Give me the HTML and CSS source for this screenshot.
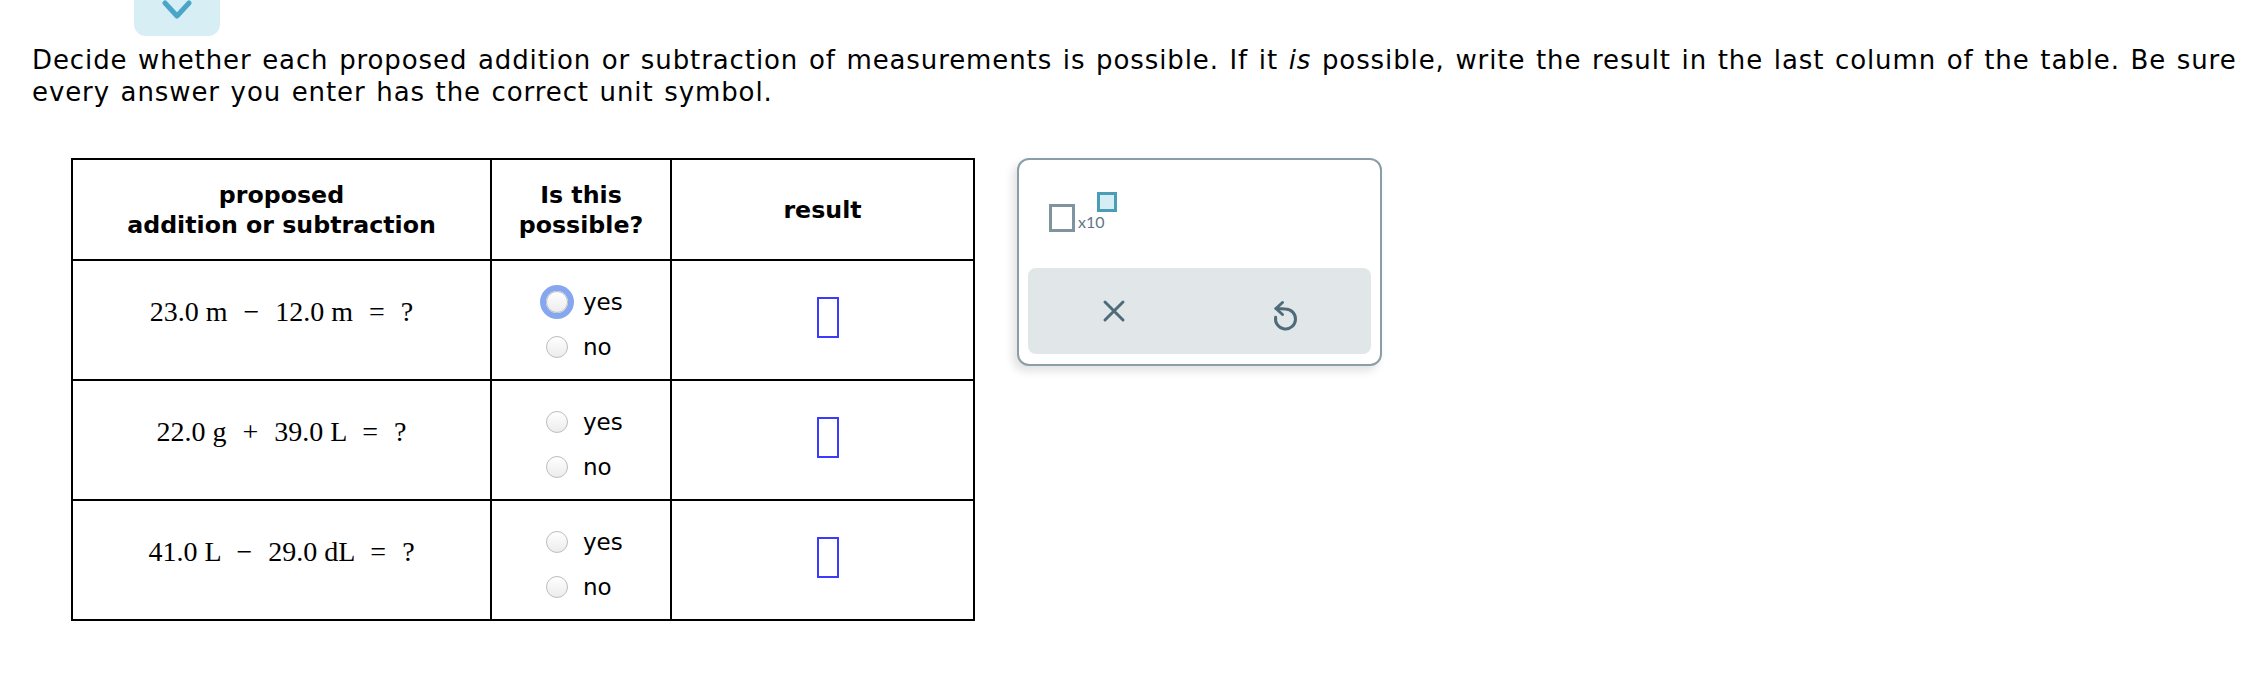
FILE: index.html
```html
<!DOCTYPE html>
<html lang="en">

<head>
    <meta charset="UTF-8">
    <title>Measurements</title>
    <link rel="stylesheet" href="styles.css">
</head>

<body>
    <div class="tab">
        <svg width="34" height="22" viewBox="0 0 34 22">
            <path d="M5 3 L17 16 L29 3" fill="none" stroke="#4aa6c8" stroke-width="5" stroke-linecap="round" stroke-linejoin="round" />
        </svg>
    </div>

    <p class="prompt">Decide whether each proposed addition or subtraction of measurements is possible. If it <i>is</i> possible, write the result in the last column of the table. Be sure every answer you enter has the correct unit symbol.</p>

    <div class="work">
        <table class="grid">
            <tr class="head">
                <th class="c1">proposed<br>addition or subtraction</th>
                <th class="c2">Is this<br>possible?</th>
                <th class="c3">result</th>
            </tr>
            <tr>
                <td class="math">23.0 m <span class="op">−</span> 12.0 m <span class="op">=</span> ?</td>
                <td>
                    <div class="choices">
                        <label class="opt"><span class="radio focus"></span>yes</label>
                        <label class="opt"><span class="radio"></span>no</label>
                    </div>
                </td>
                <td class="res"><span class="box"></span></td>
            </tr>
            <tr>
                <td class="math">22.0 g <span class="op">+</span> 39.0 L <span class="op">=</span> ?</td>
                <td>
                    <div class="choices">
                        <label class="opt"><span class="radio"></span>yes</label>
                        <label class="opt"><span class="radio"></span>no</label>
                    </div>
                </td>
                <td class="res"><span class="box"></span></td>
            </tr>
            <tr>
                <td class="math">41.0 L <span class="op">−</span> 29.0 dL <span class="op">=</span> ?</td>
                <td>
                    <div class="choices">
                        <label class="opt"><span class="radio"></span>yes</label>
                        <label class="opt"><span class="radio"></span>no</label>
                    </div>
                </td>
                <td class="res"><span class="box"></span></td>
            </tr>
        </table>

        <div class="panel">
            <div class="sci">
                <span class="base"></span>
                <span class="x10">x10</span>
                <span class="exp"></span>
            </div>
            <div class="bar">
                <div class="btn">
                    <svg width="26" height="26" viewBox="0 0 26 26">
                        <path d="M4 4 L22 22 M22 4 L4 22" fill="none" stroke="#4e6b79" stroke-width="3" stroke-linecap="round" />
                    </svg>
                </div>
                <div class="btn">
                    <svg class="undo" width="30" height="32" viewBox="0 0 30 32">
                        <path d="M5.65 18.26 A10 10 0 1 0 15.5 10 L6 9.5" fill="none" stroke="#4e6b79" stroke-width="3" stroke-linecap="round" stroke-linejoin="round" />
                        <path d="M12.5 3.5 L6 9.5 L12.5 15.5" fill="none" stroke="#4e6b79" stroke-width="3" stroke-linecap="round" stroke-linejoin="round" />
                    </svg>
                </div>
            </div>
        </div>
    </div>
</body>

</html>
```

FILE: styles.css
```css
* {
    margin: 0;
    padding: 0;
    box-sizing: border-box;
}

body {
    font-family: "DejaVu Sans", Verdana, sans-serif;
    color: #000;
    background: #fff;
}

.tab {
    width: 86px;
    height: 36px;
    margin-left: 134px;
    background: #d6eef4;
    border-radius: 0 0 12px 12px;
    display: flex;
    justify-content: center;
}

.prompt {
    margin-top: 8px;
    padding: 0 20px 0 32px;
    font-size: 26px;
    line-height: 32px;
    letter-spacing: 0.9px;
    word-spacing: 1.5px;
}

.work {
    display: flex;
    align-items: flex-start;
    gap: 42px;
    margin: 50px 0 0 71px;
}

/* table ------------------------------------------------ */

.grid {
    border-collapse: collapse;
}

.grid th,
.grid td {
    border: 2px solid #000;
    text-align: center;
    vertical-align: middle;
    padding: 0;
}

.head th {
    height: 101px;
    font-size: 23.7px;
    line-height: 30px;
    font-weight: bold;
}

.c1 {
    width: 419px;
}

.c2 {
    width: 180px;
}

.c3 {
    width: 303px;
}

.grid td {
    height: 120px;
}

.math {
    font-family: "Liberation Serif", "Times New Roman", serif;
    font-size: 28px;
    padding-bottom: 16px !important;
}

.op {
    margin: 0 9px;
}

.choices {
    display: flex;
    flex-direction: column;
    padding: 8px 0 0 54px;
}

.opt {
    display: flex;
    align-items: center;
    height: 45px;
    font-size: 23px;
    text-align: left;
}

.radio {
    width: 22px;
    height: 22px;
    border-radius: 50%;
    border: 1px solid #bdbdbd;
    background: linear-gradient(#fff, #ececec);
    margin-right: 15px;
}

.radio.focus {
    box-shadow: 0 0 0 6px #86a7ef;
}

.res {
    padding-left: 10px !important;
    padding-bottom: 6px !important;
}

.box {
    display: inline-block;
    width: 22px;
    height: 41px;
    border: 2px solid #3b3bff;
    vertical-align: middle;
}

/* answer tools ------------------------------------------ */

.panel {
    width: 365px;
    height: 208px;
    border: 2px solid #8b9ea7;
    border-radius: 12px;
    box-shadow: -4px 5px 10px rgba(0, 0, 0, 0.12);
    background: #fff;
}

.sci {
    display: flex;
    align-items: flex-end;
    height: 40px;
    margin: 32px 0 0 30px;
}

.base {
    width: 26px;
    height: 28px;
    border: 3px solid #7f949e;
}

.x10 {
    font-family: Lato, "Open Sans", sans-serif;
    font-size: 16px;
    line-height: 16px;
    color: #5f7782;
    margin-left: 3px;
    margin-bottom: 2px;
}

.exp {
    align-self: flex-start;
    width: 20px;
    height: 20px;
    border: 3px solid #4a9cb7;
    background: #d4eef3;
    margin-left: -8px;
}

.bar {
    display: flex;
    height: 86px;
    margin: 36px 9px 0 9px;
    background: #e1e6e9;
    border-radius: 8px;
}

.btn {
    flex: 1;
    display: flex;
    align-items: center;
    justify-content: center;
}

.undo {
    margin-top: 8px;
}
```
